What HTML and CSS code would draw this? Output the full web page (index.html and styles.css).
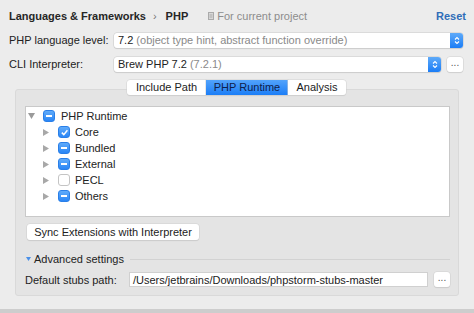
FILE: index.html
```html
<html>
    <head>
        <title>PHP Settings</title>
        <link rel="stylesheet" href="styles.css">
    </head>
    <body>
        <div class="settings">
            <div class="header">
                <span class="crumb">Languages &amp; Frameworks</span>
                <span class="sep">&#8250;</span>
                <span class="crumb">PHP</span>
                <span class="scope">
                    <svg width="6" height="8" viewBox="0 0 6 8"><rect x="0.5" y="0.5" width="5" height="7" fill="#d8d8d8" stroke="#aaa"/><line x1="1.5" y1="3" x2="4.5" y2="3" stroke="#aaa"/><line x1="1.5" y1="5" x2="4.5" y2="5" stroke="#aaa"/></svg>
                    For current project
                </span>
                <span class="reset">Reset</span>
            </div>

            <div class="formRow">
                <div class="label">PHP language level:</div>
                <div class="select">
                    <div class="selectText"><span class="val">7.2</span> <span class="hint">(object type hint, abstract function override)</span></div>
                    <div class="selectArrow">
                        <svg width="6" height="9" viewBox="0 0 6 9"><path d="M1 3.5 L3 1.5 L5 3.5 M1 5.5 L3 7.5 L5 5.5" fill="none" stroke="white" stroke-width="1.1"/></svg>
                    </div>
                </div>
            </div>
            <div class="formRow">
                <div class="label">CLI Interpreter:</div>
                <div class="select">
                    <div class="selectText"><span class="val">Brew PHP 7.2</span> <span class="hint">(7.2.1)</span></div>
                    <div class="selectArrow">
                        <svg width="6" height="9" viewBox="0 0 6 9"><path d="M1 3.5 L3 1.5 L5 3.5 M1 5.5 L3 7.5 L5 5.5" fill="none" stroke="white" stroke-width="1.1"/></svg>
                    </div>
                </div>
                <div class="dots">...</div>
            </div>

            <div class="tabs">
                <div class="tab first">Include Path</div>
                <div class="tab active">PHP Runtime</div>
                <div class="tab last">Analysis</div>
            </div>

            <div class="panel">
                <div class="tree">
                    <div class="node root">
                        <span class="arrow"><svg width="7" height="6" viewBox="0 0 7 6"><path d="M0 0 L7 0 L3.5 6 Z" fill="#9a9a9a"/></svg></span>
                        <span class="check partial"></span>
                        <span class="nodeText">PHP Runtime</span>
                    </div>
                    <div class="node child">
                        <span class="arrow"><svg width="6" height="7" viewBox="0 0 6 7"><path d="M0 0 L6 3.5 L0 7 Z" fill="#a8a8a8"/></svg></span>
                        <span class="check checked"><svg width="9" height="9" viewBox="0 0 9 9"><path d="M1.8 4.6 L3.8 6.6 L7.4 2.2" fill="none" stroke="white" stroke-width="1.5"/></svg></span>
                        <span class="nodeText">Core</span>
                    </div>
                    <div class="node child">
                        <span class="arrow"><svg width="6" height="7" viewBox="0 0 6 7"><path d="M0 0 L6 3.5 L0 7 Z" fill="#a8a8a8"/></svg></span>
                        <span class="check partial"></span>
                        <span class="nodeText">Bundled</span>
                    </div>
                    <div class="node child">
                        <span class="arrow"><svg width="6" height="7" viewBox="0 0 6 7"><path d="M0 0 L6 3.5 L0 7 Z" fill="#a8a8a8"/></svg></span>
                        <span class="check partial"></span>
                        <span class="nodeText">External</span>
                    </div>
                    <div class="node child">
                        <span class="arrow"><svg width="6" height="7" viewBox="0 0 6 7"><path d="M0 0 L6 3.5 L0 7 Z" fill="#a8a8a8"/></svg></span>
                        <span class="check"></span>
                        <span class="nodeText">PECL</span>
                    </div>
                    <div class="node child">
                        <span class="arrow"><svg width="6" height="7" viewBox="0 0 6 7"><path d="M0 0 L6 3.5 L0 7 Z" fill="#a8a8a8"/></svg></span>
                        <span class="check partial"></span>
                        <span class="nodeText">Others</span>
                    </div>
                </div>

                <div class="button">Sync Extensions with Interpreter</div>

                <div class="advanced">
                    <svg width="5" height="4" viewBox="0 0 5 4"><path d="M0 0 L5 0 L2.5 4 Z" fill="#4a90e8"/></svg>
                    <span class="advText">Advanced settings</span>
                    <div class="advLine"></div>
                </div>

                <div class="stubsRow">
                    <div class="stubsLabel">Default stubs path:</div>
                    <div class="input">/Users/jetbrains/Downloads/phpstorm-stubs-master</div>
                    <div class="dots">...</div>
                </div>
            </div>
        </div>
        <div class="bottomBar"></div>
    </body>
</html>
```

FILE: styles.css
```css
body {
    margin: 0;
    background-color: #ececec;
    font-family: "Liberation Sans", Arial, sans-serif;
    font-size: 11px;
    color: #222;
    width: 474px;
    height: 313px;
    overflow: hidden;
}
.settings {
    height: 309px;
}
.header {
    display: flex;
    align-items: center;
    height: 32px;
    padding: 0 8px 0 9px;
}
.crumb {
    font-weight: bold;
    color: #262626;
}
.sep {
    margin: 0 9px 0 7px;
    color: #777;
    font-size: 11px;
}
.scope {
    display: flex;
    align-items: center;
    margin-left: 20px;
    color: #8d8d8d;
}
.scope svg {
    margin-right: 3px;
}
.reset {
    margin-left: auto;
    font-weight: bold;
    color: #2f6db8;
}
.formRow {
    display: flex;
    align-items: center;
    height: 16px;
    margin-bottom: 8px;
    padding: 0 11px 0 9px;
}
.label {
    width: 105px;
    flex-shrink: 0;
}
.select {
    flex: 1;
    display: flex;
    height: 15px;
    background-color: white;
    border-radius: 3px;
    box-shadow: 0 0 0 0.5px #c9c9c9, 0 1px 1px rgba(0,0,0,0.12);
    overflow: hidden;
}
.selectText {
    flex: 1;
    padding-left: 4px;
    line-height: 15px;
    white-space: nowrap;
}
.val {
    color: #222;
}
.hint {
    color: #8a8a8a;
}
.selectArrow {
    width: 13px;
    display: flex;
    align-items: center;
    justify-content: center;
    background: linear-gradient(#5eaaf9, #1b7df6);
}
.dots {
    width: 16px;
    height: 15px;
    margin-left: 6px;
    background-color: white;
    border-radius: 3px;
    box-shadow: 0 0 0 0.5px #cfcfcf, 0 1px 1px rgba(0,0,0,0.12);
    text-align: center;
    line-height: 12px;
    font-size: 10px;
    color: #555;
}
.tabs {
    position: relative;
    z-index: 1;
    display: flex;
    justify-content: center;
    margin-top: 4px;
    padding-right: 1px;
}
.tab {
    height: 15px;
    line-height: 15px;
    background-color: white;
    text-align: center;
    box-shadow: 0 0 0 0.5px #d2d2d2, 0 1px 1px rgba(0,0,0,0.1);
}
.tab.first {
    width: 79px;
    border-radius: 3px 0 0 3px;
}
.tab.active {
    width: 82px;
    background: linear-gradient(#52a3fb, #1c7ef7);
    color: #10204a;
}
.tab.last {
    width: 58px;
    border-radius: 0 3px 3px 0;
}
.panel {
    margin: -6px 15px 0 15px;
    height: 189px;
    padding: 16px 8px 0 9px;
    background-color: #e4e4e4;
    border: 1px solid #d9d9d9;
    border-radius: 3px;
}
.tree {
    height: 108px;
    background-color: white;
    border: 1px solid #c9c9c9;
    padding-top: 1px;
}
.node {
    display: flex;
    align-items: center;
    height: 16px;
}
.node.root {
    padding-left: 2px;
}
.node.child {
    padding-left: 17px;
}
.arrow {
    width: 15px;
    display: flex;
    align-items: center;
}
.check {
    width: 10px;
    height: 10px;
    border-radius: 3px;
    background-color: white;
    border: 0.5px solid #c4c4c4;
    display: flex;
    align-items: center;
    justify-content: center;
    box-sizing: content-box;
}
.check.partial, .check.checked {
    background: linear-gradient(#60abfa, #2a86f6);
    border-color: #2a7fe8;
}
.check.partial::after {
    content: "";
    width: 6px;
    height: 2px;
    background-color: white;
}
.nodeText {
    margin-left: 5px;
}
.root .nodeText {
    margin-left: 6px;
}
.button {
    display: inline-block;
    margin: 7px 0 0 2px;
    width: 172px;
    height: 16px;
    line-height: 16px;
    text-align: center;
    background-color: white;
    border-radius: 3px;
    box-shadow: 0 0 0 0.5px #cfcfcf, 0 1px 1px rgba(0,0,0,0.12);
}
.advanced {
    display: flex;
    align-items: center;
    height: 16px;
    margin-top: 11px;
    padding-left: 1px;
}
.advText {
    margin-left: 3px;
}
.advLine {
    flex: 1;
    height: 1px;
    margin-left: 6px;
    background-color: #d2d2d2;
}
.stubsRow {
    display: flex;
    align-items: center;
    margin-top: 5px;
}
.stubsLabel {
    width: 104px;
    flex-shrink: 0;
}
.input {
    flex: 1;
    height: 15px;
    line-height: 15px;
    padding-left: 3px;
    background-color: white;
    border: 1px solid #d0d0d0;
    box-sizing: border-box;
    white-space: nowrap;
    overflow: hidden;
}
.stubsRow .dots {
    margin-left: 6px;
}
.bottomBar {
    height: 4px;
    background-color: #cdcdcd;
}
```
